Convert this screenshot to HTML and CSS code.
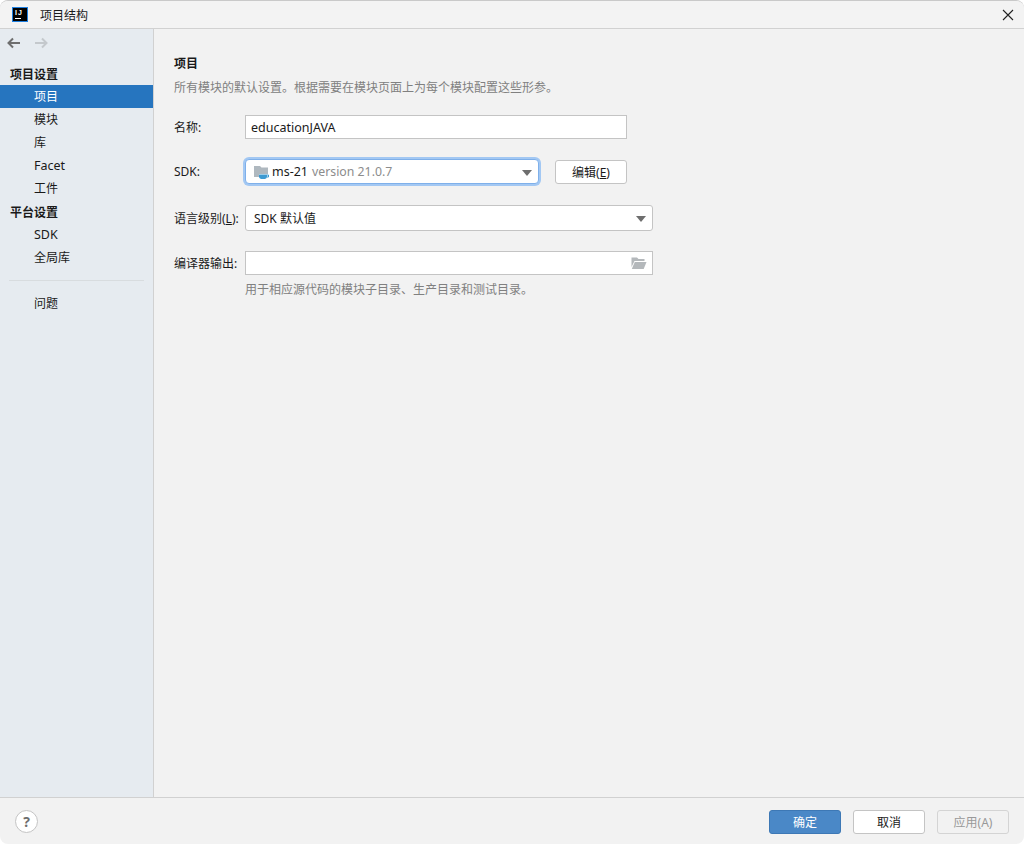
FILE: index.html
```html
<!DOCTYPE html>
<html lang="zh-CN">
<head>
    <meta charset="UTF-8">
    <title>项目结构</title>
    <link rel="stylesheet" href="styles.css">
</head>
<body>
    <div class="window">
        <div class="titlebar">
            <div class="app-logo"><span class="logo-text">IJ</span><span class="logo-bar"></span></div>
            <span class="title-text">项目结构</span>
            <svg class="close-icon" width="12" height="12" viewBox="0 0 12 12"><path d="M1 1L11 11M11 1L1 11" stroke="#222" stroke-width="1.1" fill="none"/></svg>
        </div>

        <div class="content">
            <div class="sidebar">
                <div class="nav-arrows">
                    <svg width="16" height="14" viewBox="0 0 16 14"><path d="M14 7H2.5M7 2.5L2.5 7L7 11.5" stroke="#6e6e6e" stroke-width="2" fill="none"/></svg>
                    <svg width="16" height="14" viewBox="0 0 16 14"><path d="M2 7H13.5M9 2.5L13.5 7L9 11.5" stroke="#c4c8cc" stroke-width="2" fill="none"/></svg>
                </div>
                <div class="side-head">项目设置</div>
                <div class="side-item selected">项目</div>
                <div class="side-item">模块</div>
                <div class="side-item">库</div>
                <div class="side-item latin">Facet</div>
                <div class="side-item">工件</div>
                <div class="side-head">平台设置</div>
                <div class="side-item latin">SDK</div>
                <div class="side-item">全局库</div>
                <div class="side-sep"></div>
                <div class="side-item">问题</div>
            </div>

            <div class="main">
                <div class="main-title">项目</div>
                <div class="main-desc">所有模块的默认设置。根据需要在模块页面上为每个模块配置这些形参。</div>

                <div class="form-row row-name">
                    <label class="form-label">名称:</label>
                    <div class="field field-name">educationJAVA</div>
                </div>

                <div class="form-row row-sdk">
                    <label class="form-label">SDK:</label>
                    <div class="field combo combo-sdk">
                        <svg class="sdk-icon" width="16" height="16" viewBox="0 0 16 16">
                            <path d="M0 2H6L7.5 3.5H14V10H5V13H0Z" fill="#afb8bf"/>
                            <path d="M5 10.5H13V12.5C13 14 12 15 10.5 15H7.5C6 15 5 14 5 12.5Z" fill="#3d9ad1"/>
                            <path d="M13 11H14.5V13H13" stroke="#3d9ad1" fill="none"/>
                        </svg>
                        <span class="sdk-name">ms-21</span>
                        <span class="sdk-version">version 21.0.7</span>
                        <span class="caret"></span>
                    </div>
                    <button class="btn btn-edit">编辑(<u>E</u>)</button>
                </div>

                <div class="form-row row-lang">
                    <label class="form-label">语言级别(<u>L</u>):</label>
                    <div class="field combo combo-lang">
                        <span class="lang-value">SDK 默认值</span>
                        <span class="caret"></span>
                    </div>
                </div>

                <div class="form-row row-output">
                    <label class="form-label">编译器输出:</label>
                    <div class="field field-output">
                        <svg width="16" height="14" viewBox="0 0 16 14">
                            <path d="M0.5 1.5H6L7.5 3H13.5V5H3.5L0.5 11Z" fill="#b4b8bb"/>
                            <path d="M3.8 6H15.5L12.7 13H0.8Z" fill="#b4b8bb"/>
                        </svg>
                    </div>
                </div>
                <div class="output-hint">用于相应源代码的模块子目录、生产目录和测试目录。</div>
            </div>
        </div>

        <div class="footer">
            <div class="help-btn">?</div>
            <div class="footer-btns">
                <button class="btn btn-primary">确定</button>
                <button class="btn">取消</button>
                <button class="btn btn-disabled">应用(A)</button>
            </div>
        </div>
    </div>
</body>
</html>
```

FILE: styles.css
```css
* {
    margin: 0;
    padding: 0;
    box-sizing: border-box;
}

body {
    width: 1024px;
    height: 844px;
    overflow: hidden;
    background: #ffffff;
    font-family: "Noto Sans", "Noto Sans CJK SC", sans-serif;
    font-size: 12px;
    color: #1a1a1a;
}

.window {
    display: flex;
    flex-direction: column;
    height: 844px;
    background: #f2f2f2;
    border-top: 1px solid #c9c9c9;
    border-radius: 8px;
    overflow: hidden;
}

.titlebar {
    display: flex;
    align-items: center;
    height: 28px;
    flex-shrink: 0;
    padding-left: 12px;
    background: #f3f3f3;
    border-bottom: 1px solid #d1d1d1;
}

.app-logo {
    position: relative;
    width: 16px;
    height: 15px;
    background: #000;
    border: 1px solid #1e7fe0;
    color: #fff;
}

.logo-text {
    position: absolute;
    left: 2px;
    top: 1px;
    font-family: "Liberation Sans", sans-serif;
    font-size: 7px;
    line-height: 7px;
    font-weight: 700;
    letter-spacing: 1px;
}

.logo-bar {
    position: absolute;
    left: 2px;
    bottom: 2px;
    width: 6px;
    height: 1px;
    background: #fff;
}

.title-text {
    margin-left: 12px;
}

.close-icon {
    margin-left: auto;
    margin-right: 10px;
}

.content {
    display: flex;
    flex: 1;
    min-height: 0;
}

.sidebar {
    width: 154px;
    flex-shrink: 0;
    background: #e6ebf0;
    border-right: 1px solid #d1d1d1;
}

.nav-arrows {
    display: flex;
    gap: 11px;
    height: 33px;
    padding: 7px 0 0 6px;
}

.side-head {
    height: 23px;
    line-height: 25px;
    padding-left: 10px;
    font-weight: 700;
}

.side-item {
    height: 23px;
    line-height: 23px;
    padding-left: 34px;
}

.side-item.latin {
    font-size: 12.5px;
}

.side-item.selected {
    background: #2675bf;
    color: #fff;
}

.side-sep {
    height: 1px;
    margin: 11px 9px;
    background: #d8dcdf;
}

.main {
    flex: 1;
    padding: 25px 0 0 20px;
}

.main-title {
    font-weight: 700;
    line-height: 20px;
}

.main-desc {
    margin-top: 5px;
    line-height: 18px;
    color: #808080;
}

.form-row {
    display: flex;
    align-items: center;
}

.row-name {
    margin-top: 18px;
}

.row-sdk {
    margin-top: 20px;
}

.row-lang {
    margin-top: 21px;
}

.row-output {
    margin-top: 20px;
}

.form-label {
    width: 71px;
    flex-shrink: 0;
}

.field {
    display: flex;
    align-items: center;
    height: 24px;
    background: #fff;
    border: 1px solid #c4c4c4;
    font-size: 12.5px;
}

.field-name {
    width: 382px;
    padding-left: 5px;
}

.combo {
    position: relative;
    border-radius: 3px;
}

.combo-sdk {
    width: 294px;
    height: 25px;
    padding-left: 8px;
    border-color: #7fb0ea;
    border-radius: 4px;
    box-shadow: 0 0 0 2px #a3c8f3;
}

.sdk-icon {
    margin-right: 2px;
}

.sdk-version {
    margin-left: 4px;
    font-size: 12.3px;
    color: #8c8c8c;
}

.caret {
    position: absolute;
    right: 6px;
    top: 10px;
    border-left: 5px solid transparent;
    border-right: 5px solid transparent;
    border-top: 6px solid #6e6e6e;
}

.combo-lang {
    width: 408px;
    height: 26px;
    padding-left: 8px;
    font-size: 12px;
}

.field-output {
    width: 408px;
    justify-content: flex-end;
    padding-right: 5px;
}

.output-hint {
    margin: 6px 0 0 71px;
    line-height: 18px;
    color: #808080;
}

.btn {
    width: 72px;
    height: 24px;
    background: #fff;
    border: 1px solid #c4c4c4;
    border-radius: 3px;
    font-family: inherit;
    font-size: 12px;
    color: #1a1a1a;
}

.btn-edit {
    margin-left: 16px;
}

.btn-primary {
    background: #4a88c7;
    border-color: #3d78b5;
    color: #fff;
}

.btn-disabled {
    background: #f2f2f2;
    border-color: #d4d4d4;
    color: #999;
}

.footer {
    display: flex;
    align-items: center;
    justify-content: space-between;
    height: 47px;
    flex-shrink: 0;
    padding: 1px 15px 0;
    border-top: 1px solid #d1d1d1;
}

.help-btn {
    width: 23px;
    height: 23px;
    line-height: 21px;
    text-align: center;
    background: #fff;
    border: 1px solid #c4c4c4;
    border-radius: 50%;
    font-size: 14px;
    font-weight: 700;
    color: #6e6e6e;
}

.footer-btns {
    display: flex;
    gap: 12px;
}
```
